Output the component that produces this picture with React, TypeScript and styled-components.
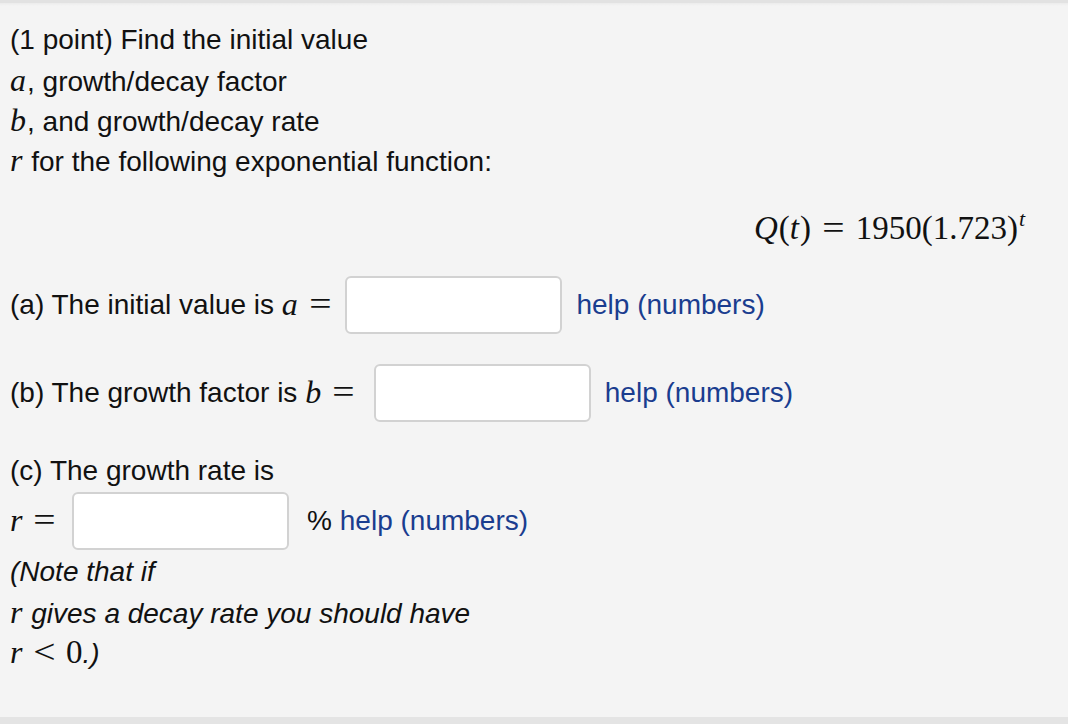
import React from 'react';
import styled, { createGlobalStyle } from 'styled-components';

const GlobalStyle = createGlobalStyle`
  html, body {
    margin: 0;
    padding: 0;
    background: #f4f4f4;
  }
`;

const Page = styled.div`
  width: 1068px;
  height: 724px;
  box-sizing: border-box;
  background: #f4f4f4;
  border-top: 3px solid #e2e2e2;
  border-bottom: 7px solid #e4e4e4;
  padding: 17px 0 0 10px;
  font-family: "Liberation Sans", Arial, sans-serif;
  font-size: 28px;
  color: #111;
  overflow: hidden;
  position: relative;
  &::before {
    content: '';
    position: absolute;
    left: 0;
    right: 0;
    top: 0;
    height: 3px;
    background: linear-gradient(#ececec, #f4f4f4);
  }
`;

const Line = styled.div`
  line-height: 40px;
  height: 40px;
  white-space: nowrap;
`;

const Var = styled.span<{ $size?: number }>`
  font-family: "Liberation Serif", "Times New Roman", serif;
  font-style: italic;
  font-size: ${(p) => p.$size ?? 32}px;
  margin-right: 1px;
`;

const Num = styled.span`
  font-family: "Liberation Serif", "Times New Roman", serif;
  font-size: 33px;
  font-style: normal;
`;

const Eq = styled.span<{ $gap?: number }>`
  display: inline-block;
  font-family: "Liberation Serif", "Times New Roman", serif;
  font-style: normal;
  font-size: 33px;
  transform: scaleX(1.2);
  margin: 0 ${(p) => p.$gap ?? 12}px;
`;

const Display = styled.div`
  margin-top: 28px;
  height: 40px;
  line-height: 40px;
  text-align: right;
  padding-right: 43px;
  font-family: "Liberation Serif", "Times New Roman", serif;
  font-size: 33px;
  white-space: nowrap;
`;

const Sup = styled.sup`
  font-family: "Liberation Serif", "Times New Roman", serif;
  font-style: italic;
  font-size: 22px;
  vertical-align: 13px;
  line-height: 0;
  margin-left: 1px;
`;

const AnswerRow = styled.div<{ $top: number }>`
  display: flex;
  align-items: center;
  height: 57px;
  margin-top: ${(p) => p.$top}px;
  white-space: nowrap;
`;

const Blank = styled.input<{ $left?: number; $right?: number }>`
  box-sizing: border-box;
  width: 217px;
  height: 58px;
  border: 2px solid #d2d2d2;
  border-radius: 6px;
  background: #fff;
  margin: 0 ${(p) => p.$right ?? 14}px 0 ${(p) => p.$left ?? 10}px;
  outline: none;
`;

const Help = styled.a`
  color: #1a3d8f;
  text-decoration: none;
`;

const Note = styled.div`
  font-style: italic;
  margin-top: 3px;
`;

export default function App() {
  return (
    <>
      <GlobalStyle />
      <Page>
        <Line>(1 point) Find the initial value</Line>
        <Line>
          <Var>a</Var>, growth/decay factor
        </Line>
        <Line>
          <Var>b</Var>, and growth/decay rate
        </Line>
        <Line>
          <Var>r</Var>&nbsp;for the following exponential function:
        </Line>

        <Display>
          <Var $size={33}>Q</Var>(<Var $size={33}>t</Var>)
          <Eq $gap={13}>=</Eq>
          1950(1.723)
          <Sup>t</Sup>
        </Display>

        <AnswerRow $top={28}>
          (a) The initial value is&nbsp;<Var>a</Var>
          <Eq>=</Eq>
          <Blank type="text" $left={4} />
          <Help href="#">help (numbers)</Help>
        </AnswerRow>

        <AnswerRow $top={31}>
          (b) The growth factor is&nbsp;<Var>b</Var>
          <Eq>=</Eq>
          <Blank type="text" $left={9} />
          <Help href="#">help (numbers)</Help>
        </AnswerRow>

        <Line style={{ marginTop: 30 }}>(c) The growth rate is</Line>
        <AnswerRow $top={1}>
          <Var>r</Var>
          <Eq>=</Eq>
          <Blank type="text" $left={6} $right={18} />
          %&nbsp;<Help href="#">help (numbers)</Help>
        </AnswerRow>

        <Note>
          <Line>(Note that if</Line>
          <Line>
            <Var>r</Var>&nbsp;gives a decay rate you should have
          </Line>
          <Line>
            <Var>r</Var>
            <Eq $gap={12}>&lt;</Eq>
            <Num>0</Num>.)
          </Line>
        </Note>
      </Page>
    </>
  );
}
